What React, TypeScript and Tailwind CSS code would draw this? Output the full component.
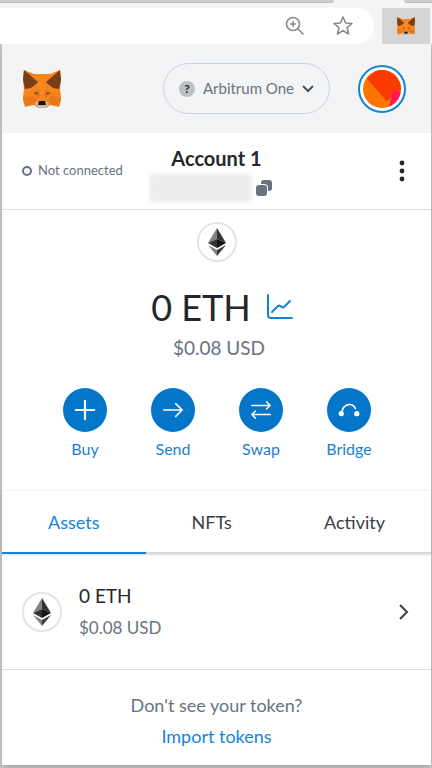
/**
 * App.tsx
 *
 * Wallet extension popup, shown under the tail of the browser toolbar.
 * Top to bottom: network bar, account bar, balance, actions, tabs, tokens.
 */

import { useState } from 'react';
import type { ReactNode } from 'react';

/* ── Data ──────────────────────────────────────────────────── */

const TABS = ['Assets', 'NFTs', 'Activity'];

const ACTIONS: { label: string; icon: ReactNode }[] = [
  {
    label: 'Buy',
    icon: <path d="M12 2v20M2 12h20" strokeWidth="2.4" />,
  },
  {
    label: 'Send',
    icon: <path d="M2 12h20M15 5l7 7-7 7" />,
  },
  {
    label: 'Swap',
    icon: <path d="M2 7h20M18 3l4 4-4 4M22 17H2M6 13l-4 4 4 4" strokeWidth="1.6" />,
  },
  {
    label: 'Bridge',
    icon: (
      <>
        <path d="M4 15C6 4 16 4 19 10.5" />
        <circle cx="3.5" cy="16" r="2" fill="currentColor" />
        <circle cx="20.5" cy="16" r="2" fill="currentColor" />
      </>
    ),
  },
];

/* ── Icons ─────────────────────────────────────────────────── */

function FoxIcon({ className }: { className: string }) {
  return (
    <svg viewBox="0 0 40 38" className={className} aria-hidden="true">
      <path d="M2 0l10 4h16l10-4 1 8-1 11 1 8 0 3-2 7-9-2-4 3h-8l-4-3-9 2-2-7 0-3 1-8-1-11z" fill="#f6851b" />
      <path d="M2 0l14 12-2 2-5 4-6 1-2-9z" fill="#763e1a" />
      <path d="M38 0L24 12l2 2 5 4 6 1 2-9z" fill="#763e1a" />
      <path d="M16 12h8l-2 8-2 10-2-10z" fill="#f88a22" />
      <path d="M14 19l4 2-1 8-4-4zM26 19l-4 2 1 8 4-4z" fill="#e57a20" />
      <path d="M1 28l10-2 4 4-4 4-8 2zM39 28l-10-2-4 4 4 4 8 2z" fill="#e8781d" />
      <path d="M11 23l4-1 1 3zM29 23l-4-1-1 3z" fill="#7a4a24" />
      <path d="M13 33l4-2h6l4 2-3 5h-8z" fill="#c9b8a8" />
      <path d="M17 31h6l1 4h-8z" fill="#161616" />
    </svg>
  );
}

function EthIcon() {
  return (
    <span className="flex size-10 shrink-0 items-center justify-center rounded-full border-2 border-[#e2e4e6] bg-white">
      <svg viewBox="0 0 18 28" className="h-7 w-[18px]" aria-hidden="true">
        <path d="M9 0v11L0 15z" fill="#828384" />
        <path d="M9 0v11l9 4z" fill="#343434" />
        <path d="M9 11v9l-9-5z" fill="#343434" />
        <path d="M9 11v9l9-5z" fill="#141414" />
        <path d="M0 17l9 5v6z" fill="#828384" />
        <path d="M18 17l-9 5v6z" fill="#3c3c3b" />
      </svg>
    </span>
  );
}

/* ── Browser toolbar ───────────────────────────────────────── */

function BrowserBar() {
  return (
    <div className="flex h-11 bg-[#f5f5f5]">
      <div className="flex flex-1 flex-col">
        <div className="flex h-2 justify-between">
          <div className="mr-[70px] h-[3px] flex-1 rounded-br border-b border-[#bdbdbd] bg-[#cfcfcf]" />
          <div className="-mr-[50px] h-[3px] w-7 shrink-0 rounded-bl border-b border-[#bdbdbd] bg-[#cfcfcf]" />
        </div>
        <div className="mr-2 flex flex-1 items-center justify-end gap-7 rounded-r-full bg-white pr-[21px] text-[#8b8b8b]">
          <button aria-label="Zoom">
            <svg viewBox="0 0 20 20" className="size-5" fill="none" stroke="currentColor" strokeWidth="1.6">
              <circle cx="8" cy="8" r="6.5" />
              <path d="M12.8 12.8l5.7 5.7M8 5v6M5 8h6" />
            </svg>
          </button>
          <button aria-label="Bookmark">
            <svg viewBox="0 0 20 20" className="size-5" fill="none" stroke="currentColor" strokeWidth="1.6" strokeLinejoin="round">
              <path d="M10 1l2.6 6 6.4.5-4.9 4.2 1.5 6.3-5.6-3.4L4.4 18l1.5-6.3L1 7.5 7.4 7z" />
            </svg>
          </button>
        </div>
      </div>
      <button aria-label="MetaMask extension" className="mt-2 mr-0.5 flex w-12 items-center justify-center bg-[#d5d5d5]">
        <FoxIcon className="h-[18px] w-5" />
      </button>
    </div>
  );
}

/* ── Header ────────────────────────────────────────────────── */

function NetworkBar() {
  return (
    <header className="flex h-[89px] items-center justify-between bg-[#f2f4f6] pr-[25px] pl-5">
      <FoxIcon className="h-[38px] w-10" />
      <div className="flex items-center gap-7">
        <button className="flex h-[51px] items-center gap-2 rounded-full border border-[#cdd0d4] px-[15px] text-[15px] text-[#6a737d]">
          <span className="flex size-4 items-center justify-center rounded-full bg-[#bbc0c5] text-xs font-bold text-[#24272a]">
            ?
          </span>
          <span>Arbitrum One</span>
          <svg viewBox="0 0 12 8" className="h-2 w-3" fill="none" stroke="#4c5055" strokeWidth="2">
            <path d="M1 1l5 5 5-5" />
          </svg>
        </button>
        <button aria-label="Account menu" className="size-12 rounded-full border-2 border-[#1484d6] bg-white p-[3px]">
          <svg viewBox="0 0 40 40" className="size-full rounded-full" aria-hidden="true">
            <path d="M0 0h40v40H0z" fill="#fc7500" />
            <path d="M4 9L20-5l25 10v12L25 33z" fill="#fa3a00" />
            <path d="M32 22l10 2-6 18-9-2z" fill="#ff1464" />
          </svg>
        </button>
      </div>
    </header>
  );
}

function AccountBar() {
  return (
    <section className="grid h-[77px] grid-cols-[1fr_auto_1fr] items-center border-b border-[#dcdee1] px-5">
      <div className="flex items-center gap-1.5 text-[13px] text-[#6a737d]">
        <span className="size-[10px] rounded-full border-2 border-[#6a737d]" />
        Not connected
      </div>
      <div className="flex flex-col items-center gap-1 pt-1.5">
        <h1 className="text-xl leading-6 font-bold text-[#24272a]">Account 1</h1>
        <button aria-label="Copy address" className="flex items-center gap-1 pr-3">
          <span className="h-7 w-[103px] bg-[#ededed] blur-[2px]" />
          <svg viewBox="0 0 16 16" className="size-4" aria-hidden="true">
            <rect x="5" width="11" height="11" rx="3" fill="#6a737d" />
            <rect x="-1" y="4" width="13" height="13" rx="4" fill="#fff" />
            <rect y="5" width="11" height="11" rx="3" fill="#6a737d" />
          </svg>
        </button>
      </div>
      <button aria-label="Account options" className="justify-self-end px-1.5">
        <svg viewBox="0 0 6 22" className="h-[22px] w-[6px]" fill="#24272a">
          <circle cx="3" cy="3" r="2.4" />
          <circle cx="3" cy="11" r="2.4" />
          <circle cx="3" cy="19" r="2.4" />
        </svg>
      </button>
    </section>
  );
}

/* ── Balance ───────────────────────────────────────────────── */

function Balance() {
  return (
    <section className="flex flex-col items-center pt-3 pl-px">
      <EthIcon />
      <div className="mt-6 flex items-center gap-4 pl-2.5">
        <span className="text-[36px] leading-[42px] text-[#24272a]">0 ETH</span>
        <button aria-label="Portfolio">
          <svg viewBox="0 0 26 26" className="size-[26px]" fill="none" stroke="#1484d6" strokeWidth="2" strokeLinecap="round" strokeLinejoin="round">
            <path d="M1 1v20q0 3 3 3h21M5 18l6-6q1-1 2 0l2 1q1 1 2 0l6-6" />
          </svg>
        </button>
      </div>
      <p className="mt-2 pl-1 text-[19px] leading-6 text-[#6a737d]">$0.08 USD</p>
      <div className="mt-7 flex w-full justify-center gap-4">
        {ACTIONS.map(({ label, icon }) => (
          <button key={label} className="flex w-[72px] flex-col items-center gap-2 text-base leading-[18px] text-[#1c7fd0]">
            <span className="flex size-11 items-center justify-center rounded-full bg-[#0376c9] text-white">
              <svg viewBox="0 0 24 24" className="size-[22px]" fill="none" stroke="currentColor" strokeWidth="1.8" strokeLinecap="round" strokeLinejoin="round">
                {icon}
              </svg>
            </span>
            {label}
          </button>
        ))}
      </div>
    </section>
  );
}

/* ── App ───────────────────────────────────────────────────── */

export default function App() {
  const [activeTab, setActiveTab] = useState('Assets');

  return (
    <div className="min-h-screen bg-[#c4c4c4] font-['Lato',sans-serif]">
      <BrowserBar />
      <main className="mr-px ml-0.5 bg-white shadow-md">
        <NetworkBar />
        <AccountBar />
        <Balance />

        <nav className="mt-8 flex border-t border-[#f5f5f5] shadow-sm">
          {TABS.map((tab) => (
            <button
              key={tab}
              onClick={() => setActiveTab(tab)}
              className={`h-[63px] flex-auto border-b-2 text-lg ${
                activeTab === tab
                  ? 'border-[#1484d6] text-[#1484d6]'
                  : 'border-[#d6d9dc] text-[#3b4046]'
              }`}
            >
              {tab}
            </button>
          ))}
        </nav>

        <button className="flex h-[116px] w-full items-center gap-[17px] border-b border-[#dcdee1] pr-[22px] pl-5 text-left">
          <EthIcon />
          <span className="flex flex-1 flex-col gap-2 leading-6">
            <span className="text-[19px] text-[#24272a]">0 ETH</span>
            <span className="text-[17px] text-[#6a737d]">$0.08 USD</span>
          </span>
          <svg viewBox="0 0 10 16" className="h-4 w-[10px]" fill="none" stroke="#3b4046" strokeWidth="2">
            <path d="M1 1l7 7-7 7" />
          </svg>
        </button>

        <footer className="flex flex-col items-center gap-[7px] pt-[23px] pb-[17px] text-lg leading-6">
          <p className="text-[#6a737d]">Don't see your token?</p>
          <a href="#import" className="text-[#1484d6]">Import tokens</a>
        </footer>
      </main>
    </div>
  );
}
